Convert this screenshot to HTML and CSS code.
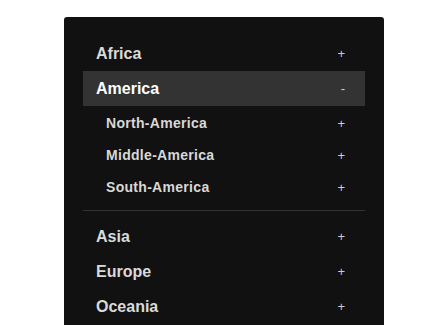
FILE: index.html
```html
<!DOCTYPE html>
<html lang="en">
<head>
    <meta charset="UTF-8">
    <meta name="viewport" content="width=device-width, initial-scale=1.0">
    <title>Continents Menu</title>
    <link rel="stylesheet" href="styles.css">
</head>
<body>
    <div class="menu">
    <ul class="list">
        <li class="item"><span>Africa</span><span class="sign">+</span></li>
        <li class="item open"><span>America</span><span class="sign">-</span></li>
        <li class="sub"><span>North-America</span><span class="sign">+</span></li>
        <li class="sub"><span>Middle-America</span><span class="sign">+</span></li>
        <li class="sub"><span>South-America</span><span class="sign">+</span></li>
        <li class="divider"></li>
        <li class="item"><span>Asia</span><span class="sign">+</span></li>
        <li class="item"><span>Europe</span><span class="sign">+</span></li>
        <li class="item"><span>Oceania</span><span class="sign">+</span></li>
    </ul>
</div>
</body>
</html>
```

FILE: styles.css
```css
body {
    margin: 0;
    background-color: #fff;
    font-family: "Liberation Sans", Arial, sans-serif;
}
.menu {
    width: 282px;
    margin: 17px 0 0 64px;
    padding: 19px 19px 1px 19px;
    background-color: #111;
    border-radius: 3px 3px 0 0;
}
.list {
    list-style: none;
    margin: 0;
    padding: 0;
}
.item {
    display: flex;
    justify-content: space-between;
    align-items: center;
    height: 35px;
    padding: 0 20px 0 13px;
    font-size: 16px;
    font-weight: bold;
    color: #dadada;
}
.open {
    background-color: #333;
    color: #fff;
}
.sub {
    display: flex;
    justify-content: space-between;
    align-items: center;
    height: 32px;
    padding: 0 20px 0 23px;
    font-size: 14px;
    letter-spacing: 0.3px;
    font-weight: bold;
    color: #d8d8d8;
}
.open + .sub {
    margin-top: 1px;
}
.divider {
    height: 1px;
    margin: 7px 0 8px 0;
    background-color: #333;
}
.sign {
    font-size: 13px;
    font-weight: normal;
    letter-spacing: 0;
    color: #ccc;
}
```
